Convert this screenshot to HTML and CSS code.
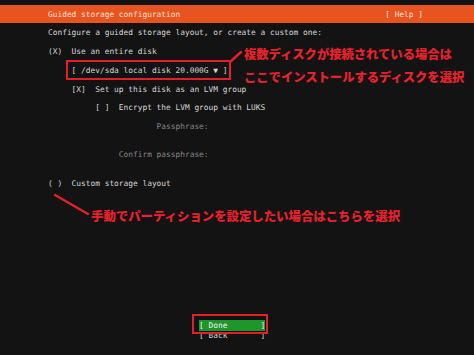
FILE: index.html
```html
<!DOCTYPE html>
<html lang="ja">
<head>
    <meta charset="UTF-8">
    <meta name="viewport" content="width=device-width, initial-scale=1.0">
    <title>Guided storage configuration</title>
    <link rel="stylesheet" href="styles.css">
</head>
<body>
    <div class="screen">
        <header class="titlebar">
            <span>Guided storage configuration</span>
            <span class="help">[ Help ]</span>
        </header>

        <main class="content">
            <div class="line first">Configure a guided storage layout, or create a custom one:</div>
            <div class="line">(X)  Use an entire disk</div>
            <div class="line i5"><span class="dropdown">[ /dev/sda local disk 20.000G ▼ ]</span></div>
            <div class="line i5">[X]  Set up this disk as an LVM group</div>
            <div class="line i10">[ ]  Encrypt the LVM group with LUKS</div>
            <div class="line i23 muted">Passphrase:</div>
            <div class="line i15 muted gap2">Confirm passphrase:</div>
            <div class="line gap2">( )  Custom storage layout</div>

            <div class="buttons">
                <div class="btn active">[ Done       ]</div>
                <div class="btn">[ Back       ]</div>
            </div>
        </main>

        <!-- annotations drawn over the screenshot -->
        <svg class="arrows" width="474" height="355" viewBox="0 0 474 355">
            <line x1="230" y1="62" x2="241" y2="52" />
            <line x1="55" y1="195" x2="88" y2="214" />
        </svg>
        <div class="note note-top">複数ディスクが接続されている場合は<br>ここでインストールするディスクを選択</div>
        <div class="note note-bottom">手動でパーティションを設定したい場合はこちらを選択</div>
    </div>
</body>
</html>
```

FILE: styles.css
```css
html, body {
    margin: 0;
    padding: 0;
    background-color: #131313;
}
.screen {
    position: relative;
    width: 474px;
    height: 355px;
    overflow: hidden;
    padding-top: 5px;
    box-sizing: border-box;
    font-family: "DejaVu Sans Mono", "Liberation Mono", monospace;
    font-size: 7.85px;
    color: #d6d6d6;
}
.titlebar {
    display: flex;
    justify-content: space-between;
    align-items: center;
    height: 18px;
    padding: 0 51px 0 48px;
    background-color: #e8541f;
    color: #f6e4da;
    white-space: pre;
}
.content {
    padding-left: 48px;
}
.line {
    height: 9.4px;
    line-height: 9.4px;
    margin-top: 9.4px;
    white-space: pre;
}
.line.first {
    margin-top: 5.3px;
}
.line.gap2 {
    margin-top: 18.8px;
}
.i5 { padding-left: 5ch; }
.i10 { padding-left: 10ch; }
.i15 { padding-left: 15ch; }
.i23 { padding-left: 23ch; }
.muted {
    color: #858585;
}
.dropdown {
    position: relative;
    display: inline-block;
}
.dropdown::after {
    content: "";
    position: absolute;
    left: -6px;
    right: -4px;
    top: -6px;
    bottom: -5px;
    border: 2.5px solid #e3202a;
}
.buttons {
    margin-top: 132px;
    padding-left: 32ch;
}
.btn {
    width: 14ch;
    height: 9px;
    line-height: 9px;
    white-space: pre;
}
.btn.active {
    position: relative;
    height: 11px;
    line-height: 11px;
    background-color: #1d962a;
    color: #f2f2f2;
}
.btn.active::after {
    content: "";
    position: absolute;
    left: -7px;
    right: -3px;
    top: -6px;
    bottom: -3px;
    border: 2.5px solid #e3202a;
}
.arrows {
    position: absolute;
    left: 0;
    top: 0;
}
.arrows line {
    stroke: #e3202a;
    stroke-width: 2.5;
    stroke-linecap: round;
}
.note {
    position: absolute;
    font-family: "Noto Sans CJK JP", sans-serif;
    font-weight: 900;
    font-size: 12.3px;
    line-height: 23px;
    color: #e8222c;
    white-space: nowrap;
}
.note-top {
    left: 244px;
    top: 43px;
}
.note-bottom {
    left: 91px;
    top: 205px;
    font-size: 12.4px;
}
```
